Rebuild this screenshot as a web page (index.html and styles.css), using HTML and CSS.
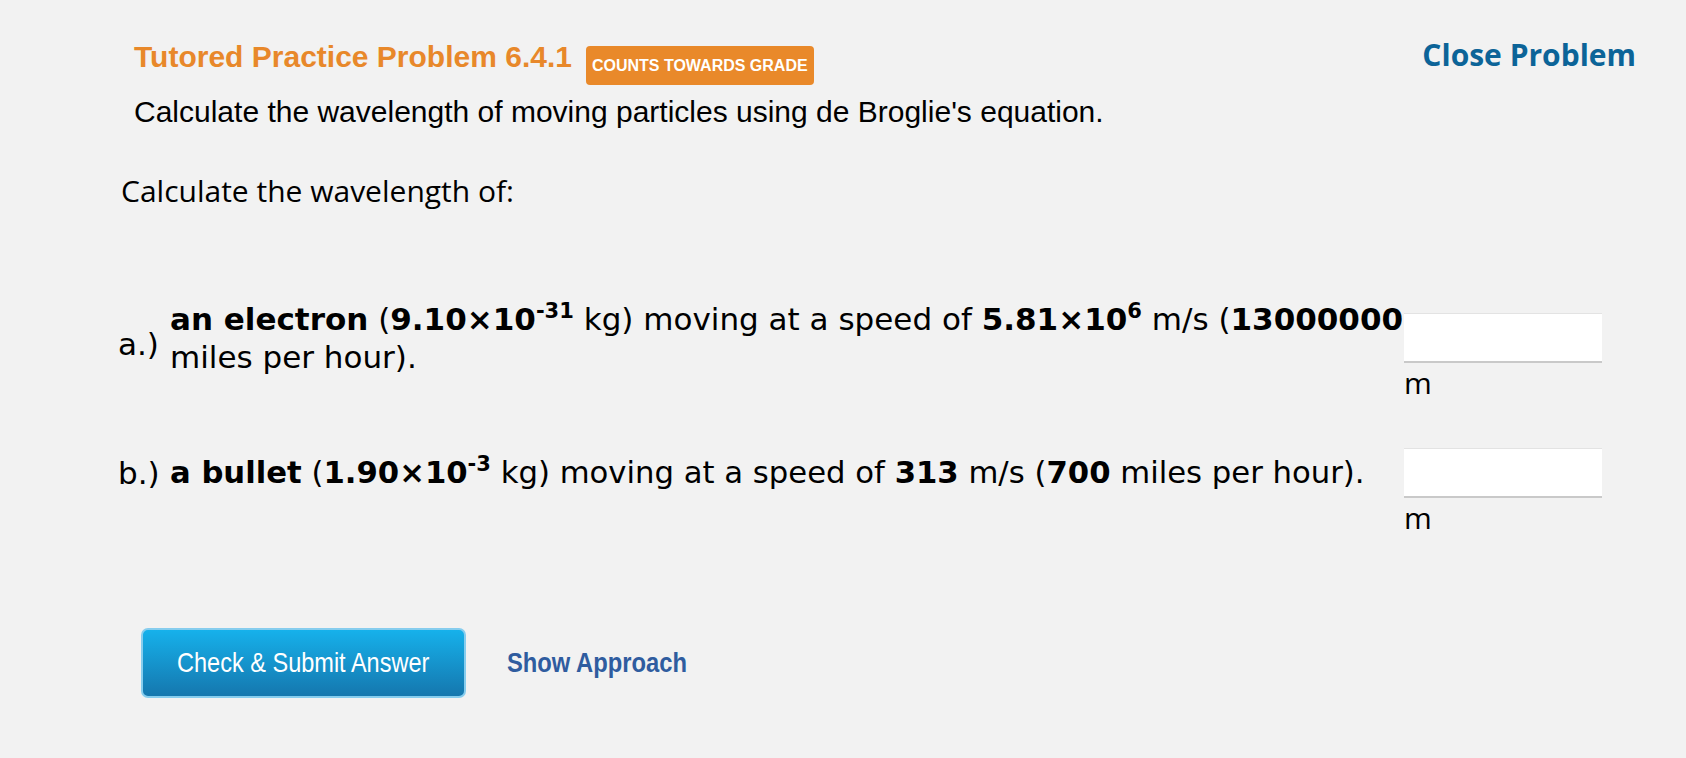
FILE: index.html
```html
<!DOCTYPE html>
<html lang="en">
<head>
<meta charset="utf-8">
<title>Tutored Practice Problem 6.4.1</title>
<link rel="stylesheet" href="styles.css">
</head>
<body>
<div class="page">
  <header class="head">
    <div class="title-row">
      <h1 class="title">Tutored Practice Problem 6.4.1</h1>
      <span class="badge">COUNTS TOWARDS GRADE</span>
    </div>
    <a class="close" href="#">Close Problem</a>
  </header>

  <p class="subtitle">Calculate the wavelength of moving particles using de Broglie's equation.</p>

  <p class="intro">Calculate the wavelength of:</p>

  <div class="questions">
    <div class="q q-multi">
      <span class="label">a.)</span>
      <div class="qtext"><b>an electron</b> (<b>9.10×10<span class="sup">-31</span></b> kg) moving at a speed of <b>5.81×10<span class="sup">6</span></b> m/s (<b>13000000</b> miles per hour).</div>
      <div class="answer">
        <span class="field"></span>
        <span class="unit">m</span>
      </div>
    </div>

    <div class="q q-single">
      <span class="label">b.)</span>
      <div class="qtext"><b>a bullet</b> (<b>1.90×10<span class="sup">-3</span></b> kg) moving at a speed of <b>313</b> m/s (<b>700</b> miles per hour).</div>
      <div class="answer">
        <span class="field"></span>
        <span class="unit">m</span>
      </div>
    </div>
  </div>

  <div class="actions">
    <button class="submit" type="button"><span class="submit-text">Check &amp; Submit Answer</span></button>
    <a class="approach" href="#">Show Approach</a>
  </div>
</div>
</body>
</html>
```

FILE: styles.css
```css
html, body {
  margin: 0;
  padding: 0;
  background: #f2f2f2;
}

.page {
  padding: 39px 50px 0 0;
}

.head {
  display: flex;
  justify-content: space-between;
  align-items: flex-start;
  padding-left: 134px;
}

.title-row {
  display: flex;
  align-items: flex-start;
  gap: 14px;
}

.title {
  margin: 0;
  font: bold 30px/36px "Liberation Sans", Arial, sans-serif;
  color: #e8882a;
}

.badge {
  margin-top: 7px;
  height: 39px;
  line-height: 39px;
  padding: 0 6px;
  background: #e9892a;
  color: #fff;
  font-family: "Liberation Sans", Arial, sans-serif;
  font-weight: bold;
  font-size: 16px;
  border-radius: 4px;
}

.close {
  margin-top: -2px;
  font: bold 30px/36px "Open Sans", sans-serif;
  color: #0c6498;
  text-decoration: none;
}

.subtitle {
  margin: 9px 0 0 134px;
  font: 30px/36px "Liberation Sans", Arial, sans-serif;
  color: #000;
}

.intro {
  margin: 43px 0 0 121px;
  font: 30px/36px "Open Sans", sans-serif;
  color: #000;
}

.questions {
  margin-top: 91px;
  display: flex;
  flex-direction: column;
  gap: 72px;
}

.q {
  display: flex;
  align-items: center;
  padding-left: 118px;
}

.label {
  flex: none;
  width: 52px;
  font: 31px/38px "DejaVu Sans", Verdana, sans-serif;
  color: #000;
}

.q-multi .label {
  margin-top: 12px;
}

.qtext {
  flex: none;
  width: 1234px;
  font: 31px/38px "DejaVu Sans", Verdana, sans-serif;
  color: #000;
}

.q-single .qtext {
  font-size: 30.7px;
}

.sup {
  font-size: 21px;
  line-height: 0;
  vertical-align: 12px;
}

.answer {
  flex: none;
  width: 198px;
  display: flex;
  flex-direction: column;
  margin-bottom: -38px;
}

.field {
  display: block;
  height: 50px;
  box-sizing: border-box;
  background: #fff;
  border-top: 1px solid #e3e3e3;
  border-bottom: 2px solid #c9c9c9;
}

.unit {
  margin-top: 2px;
  font: 30px/36px "Open Sans", sans-serif;
  color: #000;
}

.actions {
  display: flex;
  align-items: center;
  gap: 41px;
  margin-top: 130px;
  padding-left: 141px;
}

.submit {
  width: 325px;
  height: 70px;
  padding: 0;
  box-sizing: border-box;
  border: 2px solid #86cdee;
  border-radius: 7px;
  background: linear-gradient(#16b1eb, #1577ae);
  color: #fff;
  font: 28px "Liberation Sans", Arial, sans-serif;
  cursor: pointer;
}

.submit-text {
  display: inline-block;
  white-space: nowrap;
  transform: scaleX(0.84);
}

.approach {
  display: inline-block;
  font: bold 27px "Liberation Sans", Arial, sans-serif;
  color: #2f5c9f;
  text-decoration: none;
  white-space: nowrap;
  transform: scaleX(0.88);
  transform-origin: left center;
}
```
